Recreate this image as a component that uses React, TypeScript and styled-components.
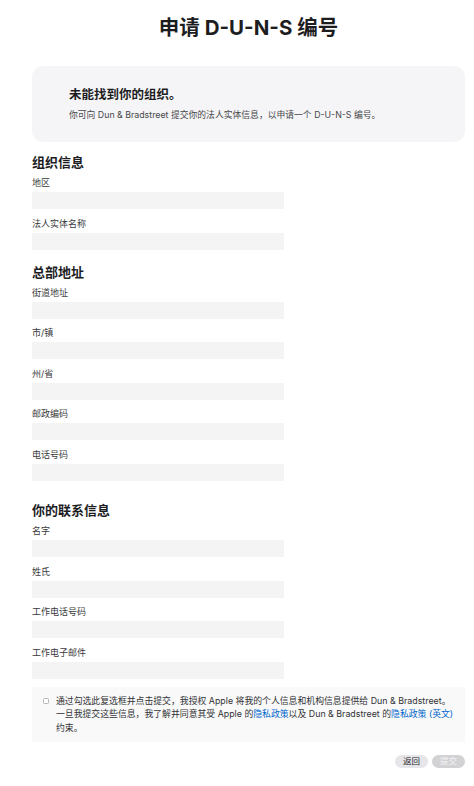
import React from "react";
import styled, { createGlobalStyle } from "styled-components";

const GlobalStyle = createGlobalStyle`
  body {
    margin: 0;
    background: #ffffff;
    font-family: Inter, "Noto Sans CJK SC", "Noto Sans", sans-serif;
    color: #1d1d1f;
  }
`;

const Page = styled.div`
  display: flex;
  flex-direction: column;
  width: 433px;
  padding: 14px 9px 18px 32px;
`;

const Title = styled.h1`
  margin: 0;
  font-size: 20.5px;
  line-height: 28px;
  font-weight: 700;
  text-align: center;
  color: #1d1d1f;
`;

const Notice = styled.div`
  margin-top: 24px;
  height: 76px;
  box-sizing: border-box;
  padding: 21px 20px 21px 37px;
  border-radius: 11px;
  background: #f5f5f7;
`;

const NoticeTitle = styled.div`
  font-size: 12.5px;
  line-height: 16px;
  font-weight: 700;
  color: #1d1d1f;
`;

const NoticeText = styled.div`
  margin-top: 6px;
  font-size: 8.8px;
  line-height: 12px;
  color: #48484a;
`;

const Section = styled.section<{ gap: number }>`
  display: flex;
  flex-direction: column;
  margin-top: ${(p) => p.gap}px;
`;

const SectionTitle = styled.h2`
  margin: 0 0 7px;
  font-size: 13px;
  line-height: 16px;
  font-weight: 600;
  color: #1d1d1f;
`;

const Field = styled.label`
  display: flex;
  flex-direction: column;
  margin-bottom: 8.5px;
`;

const FieldLabel = styled.span`
  font-size: 9px;
  line-height: 12px;
  color: #3a3a3c;
  margin-bottom: 3px;
`;

const Input = styled.input`
  display: block;
  box-sizing: border-box;
  width: 252px;
  height: 17px;
  margin: 0;
  padding: 0 6px;
  border: none;
  border-radius: 0;
  background: #f4f4f4;
  font: inherit;
  font-size: 9px;
  outline: none;
`;

const Consent = styled.div`
  display: flex;
  align-items: flex-start;
  gap: 7px;
  padding: 6.5px 6px 8px 11px;
  background: #f9f9f9;
`;

const Check = styled.input`
  appearance: none;
  flex: none;
  width: 6px;
  height: 6px;
  margin: 4.5px 0 0;
  border: 1px solid #b5b5b8;
  border-radius: 1.5px;
  background: #fff;
`;

const ConsentText = styled.p`
  margin: 0;
  font-size: 8.85px;
  line-height: 13.5px;
  color: #333336;
`;

const Link = styled.a`
  color: #0066cc;
  text-decoration: none;
  white-space: nowrap;
`;

const Actions = styled.div`
  display: flex;
  justify-content: flex-end;
  gap: 4px;
  margin-top: 13px;
`;

const Button = styled.button<{ disabled?: boolean }>`
  height: 13px;
  padding: 0 8px;
  border: none;
  border-radius: 7px;
  font: inherit;
  font-size: 8.5px;
  line-height: 13px;
  background: ${(p) => (p.disabled ? "#d2d2d5" : "#e6e6ea")};
  color: ${(p) => (p.disabled ? "#f2f2f4" : "#1d1d1f")};
`;

const sections = [
  { title: "组织信息", gap: 12, fields: ["地区", "法人实体名称"] },
  {
    title: "总部地址",
    gap: 5.5,
    fields: ["街道地址", "市/镇", "州/省", "邮政编码", "电话号码"],
  },
  {
    title: "你的联系信息",
    gap: 13,
    fields: ["名字", "姓氏", "工作电话号码", "工作电子邮件"],
  },
];

export default function App() {
  return (
    <>
      <GlobalStyle />
      <Page>
        <Title>申请 D-U-N-S 编号</Title>

        <Notice>
          <NoticeTitle>未能找到你的组织。</NoticeTitle>
          <NoticeText>
            你可向 Dun &amp; Bradstreet 提交你的法人实体信息，以申请一个 D-U-N-S 编号。
          </NoticeText>
        </Notice>

        {sections.map((s) => (
          <Section key={s.title} gap={s.gap}>
            <SectionTitle>{s.title}</SectionTitle>
            {s.fields.map((f) => (
              <Field key={f}>
                <FieldLabel>{f}</FieldLabel>
                <Input type="text" />
              </Field>
            ))}
          </Section>
        ))}

        <Consent>
          <Check type="checkbox" />
          <ConsentText>
            通过勾选此复选框并点击提交，我授权 Apple 将我的个人信息和机构信息提供给 Dun &amp; Bradstreet。一旦我提交这些信息，我了解并同意其受 Apple 的
            <Link href="#">隐私政策</Link>以及 Dun &amp; Bradstreet 的
            <Link href="#">隐私政策 (英文)</Link>约束。
          </ConsentText>
        </Consent>

        <Actions>
          <Button type="button">返回</Button>
          <Button type="button" disabled>
            提交
          </Button>
        </Actions>
      </Page>
    </>
  );
}
